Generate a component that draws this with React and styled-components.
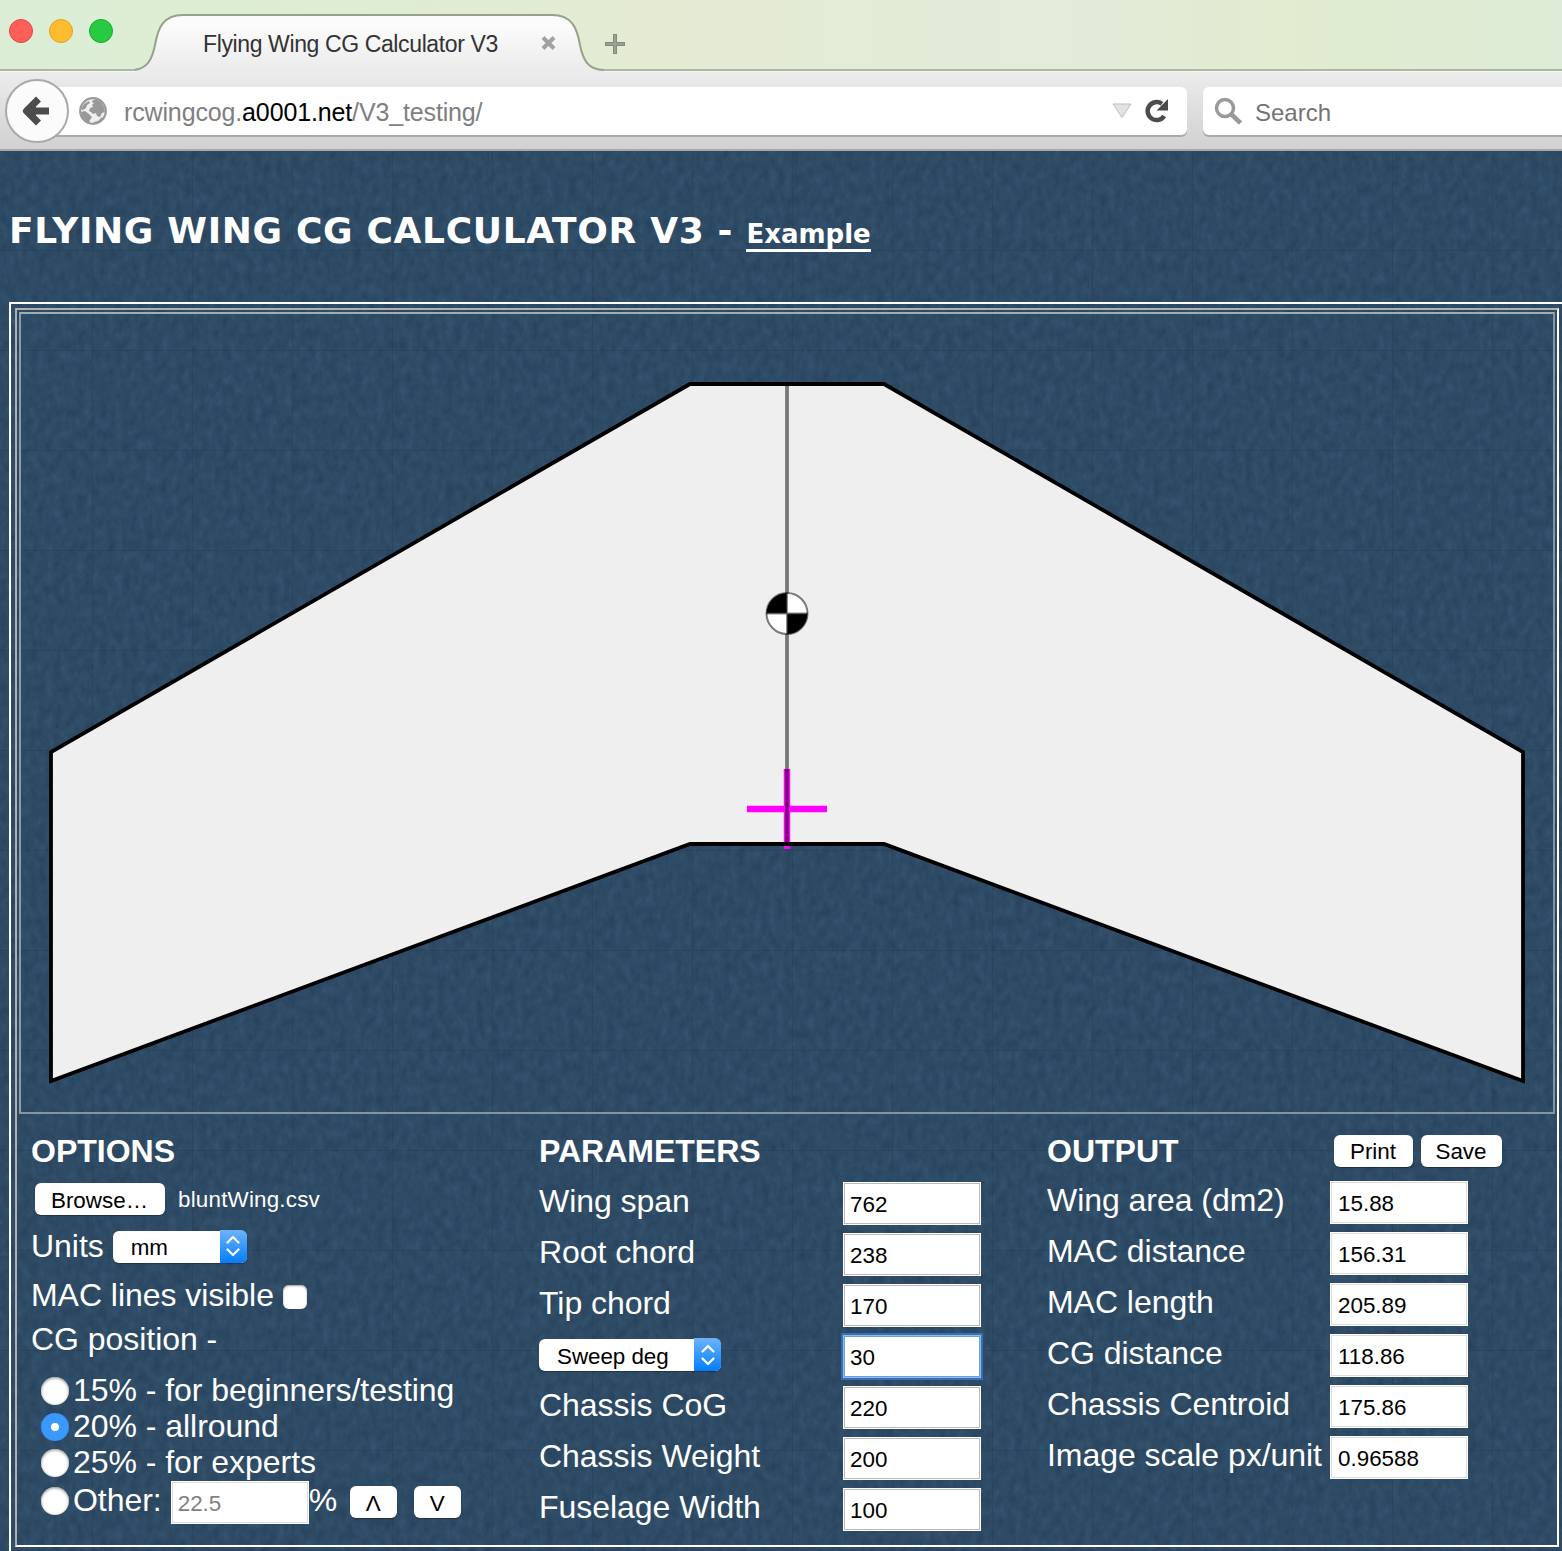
import React, { useState } from 'react';
import styled, { createGlobalStyle } from 'styled-components';

const GlobalStyle = createGlobalStyle`
  * {
    box-sizing: border-box;
  }

  body {
    margin: 0;
    background: #2d4964;
    font-family: 'Liberation Sans', Arial, sans-serif;
    overflow: hidden;
  }
`;

const Window = styled.div`
  width: 1562px;
  height: 1551px;
  display: flex;
  flex-direction: column;
  overflow: hidden;
`;

const TabStrip = styled.div`
  height: 71px;
  display: flex;
  align-items: flex-start;
  background: linear-gradient(90deg, #dbeed5 0%, #dfedd4 25%, #e5ebd3 42%, #e3ebda 68%, #e1ecd0 82%, #deebd6 100%);
  border-bottom: 2px solid #acb9a0;
`;

const Lights = styled.div`
  display: flex;
  gap: 16px;
  padding: 19px 0 0 9px;
  width: 135px;
`;

const Light = styled.span`
  width: 24px;
  height: 24px;
  border-radius: 50%;
  background: ${(props) => props.$color};
  border: 1px solid ${(props) => props.$edge};
`;

const Tab = styled.div`
  position: relative;
  width: 470px;
  height: 72px;
  display: flex;
  align-items: center;
  padding: 17px 0 0 68px;
`;

const TabShape = styled.svg`
  position: absolute;
  left: 0;
  top: 0;
`;

const TabTitle = styled.span`
  position: relative;
  width: 337px;
  font-size: 23px;
  letter-spacing: -0.38px;
  color: #333;
  white-space: nowrap;
`;

const TabClose = styled.svg`
  position: relative;
  margin-top: -3px;
`;

const NewTab = styled.svg`
  margin-top: 33px;
`;

const Toolbar = styled.div`
  height: 80px;
  display: flex;
  align-items: flex-start;
  padding: 7px 0 0 5px;
  background: linear-gradient(#ececec, #d1d1d1);
  border-top: 1px solid #f5f5f5;
  border-bottom: 2px solid #a8a8a8;
`;

const BackButton = styled.button`
  position: relative;
  z-index: 1;
  width: 64px;
  height: 64px;
  flex-shrink: 0;
  margin-right: -16px;
  padding: 0;
  border: 2px solid #a9a9a9;
  border-radius: 50%;
  background: #fbfbfb;
  display: flex;
  align-items: center;
  justify-content: center;
`;

const Field = styled.div`
  height: 48px;
  margin-top: 8px;
  display: flex;
  align-items: center;
  background: #fff;
  box-shadow: 0 2px 0 #a9a9a9;
  border-radius: ${(props) => props.$radius};
  width: ${(props) => props.$width}px;
  margin-right: ${(props) => props.$gap || 0}px;
  padding-left: ${(props) => props.$pad}px;
  flex-shrink: 0;
`;

const Address = styled.span`
  margin-left: 17px;
  padding-top: 3px;
  width: 988px;
  font-size: 25px;
  letter-spacing: -0.14px;
  color: #808080;
  white-space: nowrap;

  b {
    font-weight: normal;
    color: #000;
  }
`;

const ReloadIcon = styled.svg`
  margin-left: 13px;
`;

const SearchHint = styled.span`
  margin-left: 13px;
  padding-top: 3px;
  font-size: 24px;
  color: #747474;
`;

const Page = styled.main`
  position: relative;
  isolation: isolate;
  flex: 1;
  overflow: hidden;
  color: #fff;
`;

const Texture = styled.svg`
  position: absolute;
  inset: 0;
  z-index: -1;
`;

const Title = styled.h1`
  margin: 0;
  height: 151px;
  padding: 57px 0 0 9px;
  font: bold 36px/46px 'DejaVu Sans', Verdana, sans-serif;
  letter-spacing: 0.67px;
  white-space: nowrap;
`;

const ExampleLink = styled.a`
  font-size: 26px;
  letter-spacing: 0;
  color: #fff;
  text-decoration: none;
  display: inline-block;
  line-height: 30px;
  border-bottom: 3px solid #fff;
`;

const Frame = styled.div`
  width: 1562px;
  height: 1262px;
  margin-left: 9px;
  border: 2px solid #fff;
  padding: 4px;
`;

const Panel = styled.section`
  width: 1544px;
  height: 1239px;
  padding: 2px;
  border: 2px solid;
  border-color: #b0b0ad #fff #fff #b0b0ad;
`;

const Canvas = styled.div`
  height: 802px;
  border: 2px solid #8494a4;
  border-top-color: #a0acb7;
  border-left-color: #8d9cab;

  svg {
    display: block;
  }
`;

const Controls = styled.div`
  display: grid;
  grid-template-columns: 508px 508px 1fr;
  padding-left: 12px;
`;

const Column = styled.div`
  display: flex;
  flex-direction: column;
`;

const Heading = styled.div`
  height: ${(props) => props.$height || 64}px;
  display: flex;
  align-items: center;
  gap: 8px;
  padding-top: 10px;
`;

const HeadingText = styled.h2`
  margin: 0;
  width: ${(props) => (props.$width ? `${props.$width}px` : 'auto')};
  font-size: 32px;
  line-height: 36px;
`;

const Row = styled.div`
  height: ${(props) => props.$height}px;
  margin-top: ${(props) => props.$top || 0}px;
  padding-left: ${(props) => props.$indent || 0}px;
  display: flex;
  align-items: center;
  font-size: 32px;
  line-height: 36px;
  letter-spacing: -0.04px;
  white-space: nowrap;
`;

const RowLabel = styled.label`
  width: ${(props) => props.$width}px;
  padding-bottom: 5px;
`;

const FileName = styled.span`
  margin-left: 13px;
  padding-top: 2px;
  font-size: 22.4px;
  letter-spacing: 0.2px;
`;

const Button = styled.button`
  width: ${(props) => props.$width}px;
  height: 32px;
  margin: ${(props) => props.$margin || '0'};
  padding: 3px 1px 0 0;
  border: 0;
  border-radius: 6px;
  background: #fff;
  box-shadow: 0 1px 1px rgba(0, 0, 0, 0.35);
  font: 22.4px 'Liberation Sans', Arial, sans-serif;
  color: #000;
`;

const NumberBox = styled.input`
  width: 138px;
  height: 43px;
  margin: ${(props) => props.$margin || '0'};
  padding: 3px 0 0 ${(props) => props.$pad || 6}px;
  border: 1px solid #fff;
  border-radius: 0;
  outline: none;
  background: #fff;
  box-shadow: inset 0 0 0 1px ${(props) => props.$edge || '#b9b9b9'};
  font: 22.4px 'Liberation Sans', Arial, sans-serif;
  color: ${(props) => props.$color || '#000'};

  ${(props) =>
    props.$active &&
    `
    border-color: #8fbcf0;
    box-shadow: inset 0 0 0 1px #6a9fdc, 0 0 0 2px #3470b3;
  `}
`;

const SelectBox = styled.div`
  width: ${(props) => props.$width}px;
  height: 32px;
  margin: ${(props) => props.$margin || '0'};
  padding: 3px 0 0 18px;
  border-radius: 6px;
  background: #fff;
  box-shadow: 0 1px 1px rgba(0, 0, 0, 0.3);
  display: flex;
  align-items: center;
  justify-content: space-between;
  font-size: 22.4px;
  color: #000;
`;

const SelectArrows = styled.span`
  width: 27px;
  height: 33px;
  margin-top: -4px;
  border-radius: 0 6px 6px 0;
  background: linear-gradient(#6cb3fa, #047dfe);
  display: flex;
  align-items: center;
  justify-content: center;
`;

const Checkbox = styled.span`
  width: 24px;
  height: 24px;
  margin: 4px 0 0 9px;
  border-radius: 6px;
  background: #fff;
  box-shadow: inset 0 1px 2px #999, 0 0 1px #555;
`;

const RadioDot = styled.span`
  width: 28px;
  height: 28px;
  margin: 2px 4px 0 0;
  border-radius: 50%;
  display: flex;
  align-items: center;
  justify-content: center;
  background: ${(props) => (props.$on ? '#3b99fc' : '#fff')};
  box-shadow: ${(props) => (props.$on ? 'inset 0 0 1px #1a74d4' : 'inset 0 1px 3px #888')};

  &::after {
    content: '';
    width: 8px;
    height: 8px;
    border-radius: 50%;
    background: #fff;
  }
`;

const parameters = [
  { label: 'Wing span', value: '762' },
  { label: 'Root chord', value: '238' },
  { label: 'Tip chord', value: '170' },
  { select: 'Sweep deg', value: '30' },
  { label: 'Chassis CoG', value: '220' },
  { label: 'Chassis Weight', value: '200' },
  { label: 'Fuselage Width', value: '100' },
];

const outputs = [
  { label: 'Wing area (dm2)', value: '15.88' },
  { label: 'MAC distance', value: '156.31' },
  { label: 'MAC length', value: '205.89' },
  { label: 'CG distance', value: '118.86' },
  { label: 'Chassis Centroid', value: '175.86' },
  { label: 'Image scale px/unit', value: '0.96588' },
];

const presets = [
  { id: '15', label: '15% - for beginners/testing' },
  { id: '20', label: '20% - allround' },
  { id: '25', label: '25% - for experts' },
];

const Select = ({ children, width, margin }) => (
  <SelectBox $width={width} $margin={margin}>
    {children}
    <SelectArrows>
      <svg width="14" height="22" viewBox="0 0 14 22" fill="none" stroke="#fff" strokeWidth="2.2" strokeLinecap="round" strokeLinejoin="round">
        <path d="M1.5 7.5 7 2l5.5 5.5M1.5 14.5 7 20l5.5-5.5" />
      </svg>
    </SelectArrows>
  </SelectBox>
);

const Globe = () => (
  <svg width="28" height="28" viewBox="0 0 28 28">
    <circle cx="14" cy="14" r="12.8" fill="#f0f0f0" stroke="#9a9a9a" strokeWidth="2.2" />
    <path d="M13 4 17 2l5 3 3 5 1 5-3 1-2 4-3-1-1-3-3 1-2-2-2-1 1-3 3-1-1-2 2-2-2-1z" fill="#999" />
    <path d="M2 12 5 7l5-3 1 2-3 2-1 3-3 2zM2 15l4-1 4 3 3 3-2 3-1 3-4-2-3-5z" fill="#999" />
    <path d="M15 25l4-1 4-4 1 1-4 4-5 2z" fill="#999" />
  </svg>
);

const Browser = () => (
  <>
    <TabStrip>
      <Lights>
        <Light $color="#fe5f58" $edge="#e2443f" />
        <Light $color="#febc2f" $edge="#dfa023" />
        <Light $color="#28ca41" $edge="#17a92d" />
      </Lights>
      <Tab>
        <TabShape width="470" height="72" viewBox="0 0 470 72">
          <defs>
            <linearGradient id="tab" x1="0" y1="0" x2="0" y2="1">
              <stop offset="0.2" stopColor="#fbfbfb" />
              <stop offset="1" stopColor="#ebebeb" />
            </linearGradient>
          </defs>
          <path d="M-4 72V70C12 70 17 60 20 45C23 28 28 15 48 15H417C437 15 442 28 445 45C448 60 453 70 469 70V72Z" fill="url(#tab)" />
          <path d="M-4 70C12 70 17 60 20 45C23 28 28 15 48 15H417C437 15 442 28 445 45C448 60 453 70 469 70" fill="none" stroke="#96a18a" strokeWidth="2" />
        </TabShape>
        <TabTitle>Flying Wing CG Calculator V3</TabTitle>
        <TabClose width="18" height="16" viewBox="0 0 18 16">
          <path d="M3 2.500 14 13.500M14 2.500 3 13.500" stroke="#a2a2a2" strokeWidth="4" />
        </TabClose>
      </Tab>
      <NewTab width="22" height="22" viewBox="0 0 22 22">
        <path d="M10 1V21M0 11H20" stroke="#838a7c" strokeWidth="4" />
        <path d="M10 2V20M1 11H19" stroke="#a0a898" strokeWidth="1.5" />
      </NewTab>
    </TabStrip>
    <Toolbar>
      <BackButton>
        <svg width="30" height="32" viewBox="0 0 30 32">
          <path d="M16.500 4 4.500 16 16.500 28M6 16H27" fill="none" stroke="#4c4c4c" strokeWidth="7" strokeLinejoin="round" />
          <path d="M1 16 14 3V29Z" fill="#4c4c4c" />
        </svg>
      </BackButton>
      <Field $width={1134} $radius="0 6px 6px 0" $gap={16} $pad={26}>
        <Globe />
        <Address>
          rcwingcog.<b>a0001.net</b>/V3_testing/
        </Address>
        <svg width="20" height="16" viewBox="0 0 20 16">
          <path d="M1 1H19L10 14.500Z" fill="#e3e3e3" stroke="#bdbdbd" />
        </svg>
        <ReloadIcon width="26" height="26" viewBox="0 0 26 26">
          <path d="M19.200 18A9 9 0 1 1 17 5.800" fill="none" stroke="#4c4c4c" strokeWidth="4.500" />
          <path d="M23 1V12.500H11.500Z" fill="#4c4c4c" />
        </ReloadIcon>
      </Field>
      <Field $width={380} $radius="6px" $pad={11}>
        <svg width="28" height="28" viewBox="0 0 28 28">
          <circle cx="11" cy="11" r="8.500" fill="none" stroke="#999" strokeWidth="3.500" />
          <path d="M17 17 26.500 26" stroke="#999" strokeWidth="4.500" />
        </svg>
        <SearchHint>Search</SearchHint>
      </Field>
    </Toolbar>
  </>
);

// Denim-like page background with its faint 100px seams
const Denim = () => (
  <Texture width="1562" height="1400">
    <defs>
      <filter id="grain" x="0" y="0" width="100%" height="100%" colorInterpolationFilters="sRGB">
        <feTurbulence type="fractalNoise" baseFrequency="0.13 0.09" numOctaves="4" seed="4" />
        <feColorMatrix values="0.075 0 0 0 0.143  0.085 0 0 0 0.25  0.1 0 0 0 0.347  0 0 0 0 1" />
      </filter>
      <pattern id="seams" width="100" height="100" patternUnits="userSpaceOnUse" x="92" y="99">
        <path d="M0.500 0V100M0 0.500H100" stroke="#1c2f45" strokeOpacity="0.22" />
      </pattern>
    </defs>
    <rect width="1562" height="1400" filter="url(#grain)" />
    <rect width="1562" height="1400" fill="url(#seams)" />
  </Texture>
);

const Wing = () => (
  <svg width="1532" height="798" viewBox="21 314 1532 798">
    <path d="M690 384H884L1523 752V1081L884 844H690L51 1081V752Z" fill="#efefef" />
    <path d="M747 809H827M787 769V849" stroke="#f0f" strokeWidth="6.500" />
    <path d="M787 384V844" stroke="#000" strokeOpacity="0.5" strokeWidth="3.800" />
    <path d="M690 384H884L1523 752V1081L884 844H690L51 1081V752Z" fill="none" stroke="#000" strokeWidth="3.800" />
    <circle cx="787" cy="613.500" r="20.500" fill="#fff" />
    <path d="M787 613.500V593A20.500 20.500 0 0 0 766.500 613.500ZM787 613.500V634A20.500 20.500 0 0 0 807.500 613.500Z" fill="#000" />
    <path d="M787 593V634M766 613.500H808" stroke="#444" strokeOpacity="0.6" strokeWidth="2" />
    <circle cx="787" cy="613.500" r="20.500" fill="none" stroke="#000" strokeOpacity="0.5" strokeWidth="2" />
  </svg>
);

const Options = () => {
  const [preset, setPreset] = useState('20');

  return (
    <Column>
      <Heading>
        <HeadingText>OPTIONS</HeadingText>
      </Heading>
      <Row $height={42} $indent={4}>
        <Button $width={130}>Browse…</Button>
        <FileName>bluntWing.csv</FileName>
      </Row>
      <Row $height={51}>
        Units
        <Select width={134} margin="2px 0 0 9px">mm</Select>
      </Row>
      <Row $height={48}>
        MAC lines visible
        <Checkbox />
      </Row>
      <Row $height={40}>CG position -</Row>
      {presets.map(({ id, label }, index) => (
        <Row key={id} $height={36} $top={index === 0 ? 13 : 0} $indent={10} onClick={() => setPreset(id)}>
          <RadioDot $on={preset === id} />
          {label}
        </Row>
      ))}
      <Row $height={40} $indent={10} onClick={() => setPreset('other')}>
        <RadioDot $on={preset === 'other'} />
        Other:
        <NumberBox defaultValue="22.5" $color="#808080" $edge="#ddd" $margin="5px 0 0 9px" />
        %
        <Button $width={47} $margin="4px 17px 0 13px">Λ</Button>
        <Button $width={47} $margin="4px 0 0">V</Button>
      </Row>
    </Column>
  );
};

const App = () => (
  <Window>
    <GlobalStyle />
    <Browser />
    <Page>
      <Denim />
      <Title>
        FLYING WING CG CALCULATOR V3 - <ExampleLink>Example</ExampleLink>
      </Title>
      <Frame>
        <Panel>
          <Canvas>
            <Wing />
          </Canvas>
          <Controls>
            <Options />
            <Column>
              <Heading>
                <HeadingText>PARAMETERS</HeadingText>
              </Heading>
              {parameters.map(({ label, select, value }) => (
                <Row key={value} $height={51}>
                  {select ? (
                    <Select width={182} margin="0 122px 3px 0">{select}</Select>
                  ) : (
                    <RowLabel $width={304}>{label}</RowLabel>
                  )}
                  <NumberBox defaultValue={value} $active={Boolean(select)} />
                </Row>
              ))}
            </Column>
            <Column>
              <Heading $height={63}>
                <HeadingText $width={279}>OUTPUT</HeadingText>
                <Button $width={79}>Print</Button>
                <Button $width={81}>Save</Button>
              </Heading>
              {outputs.map(({ label, value }) => (
                <Row key={label} $height={51}>
                  <RowLabel $width={283}>{label}</RowLabel>
                  <NumberBox defaultValue={value} $edge="#ddd" $pad={7} readOnly />
                </Row>
              ))}
            </Column>
          </Controls>
        </Panel>
      </Frame>
    </Page>
  </Window>
);

export default App;
